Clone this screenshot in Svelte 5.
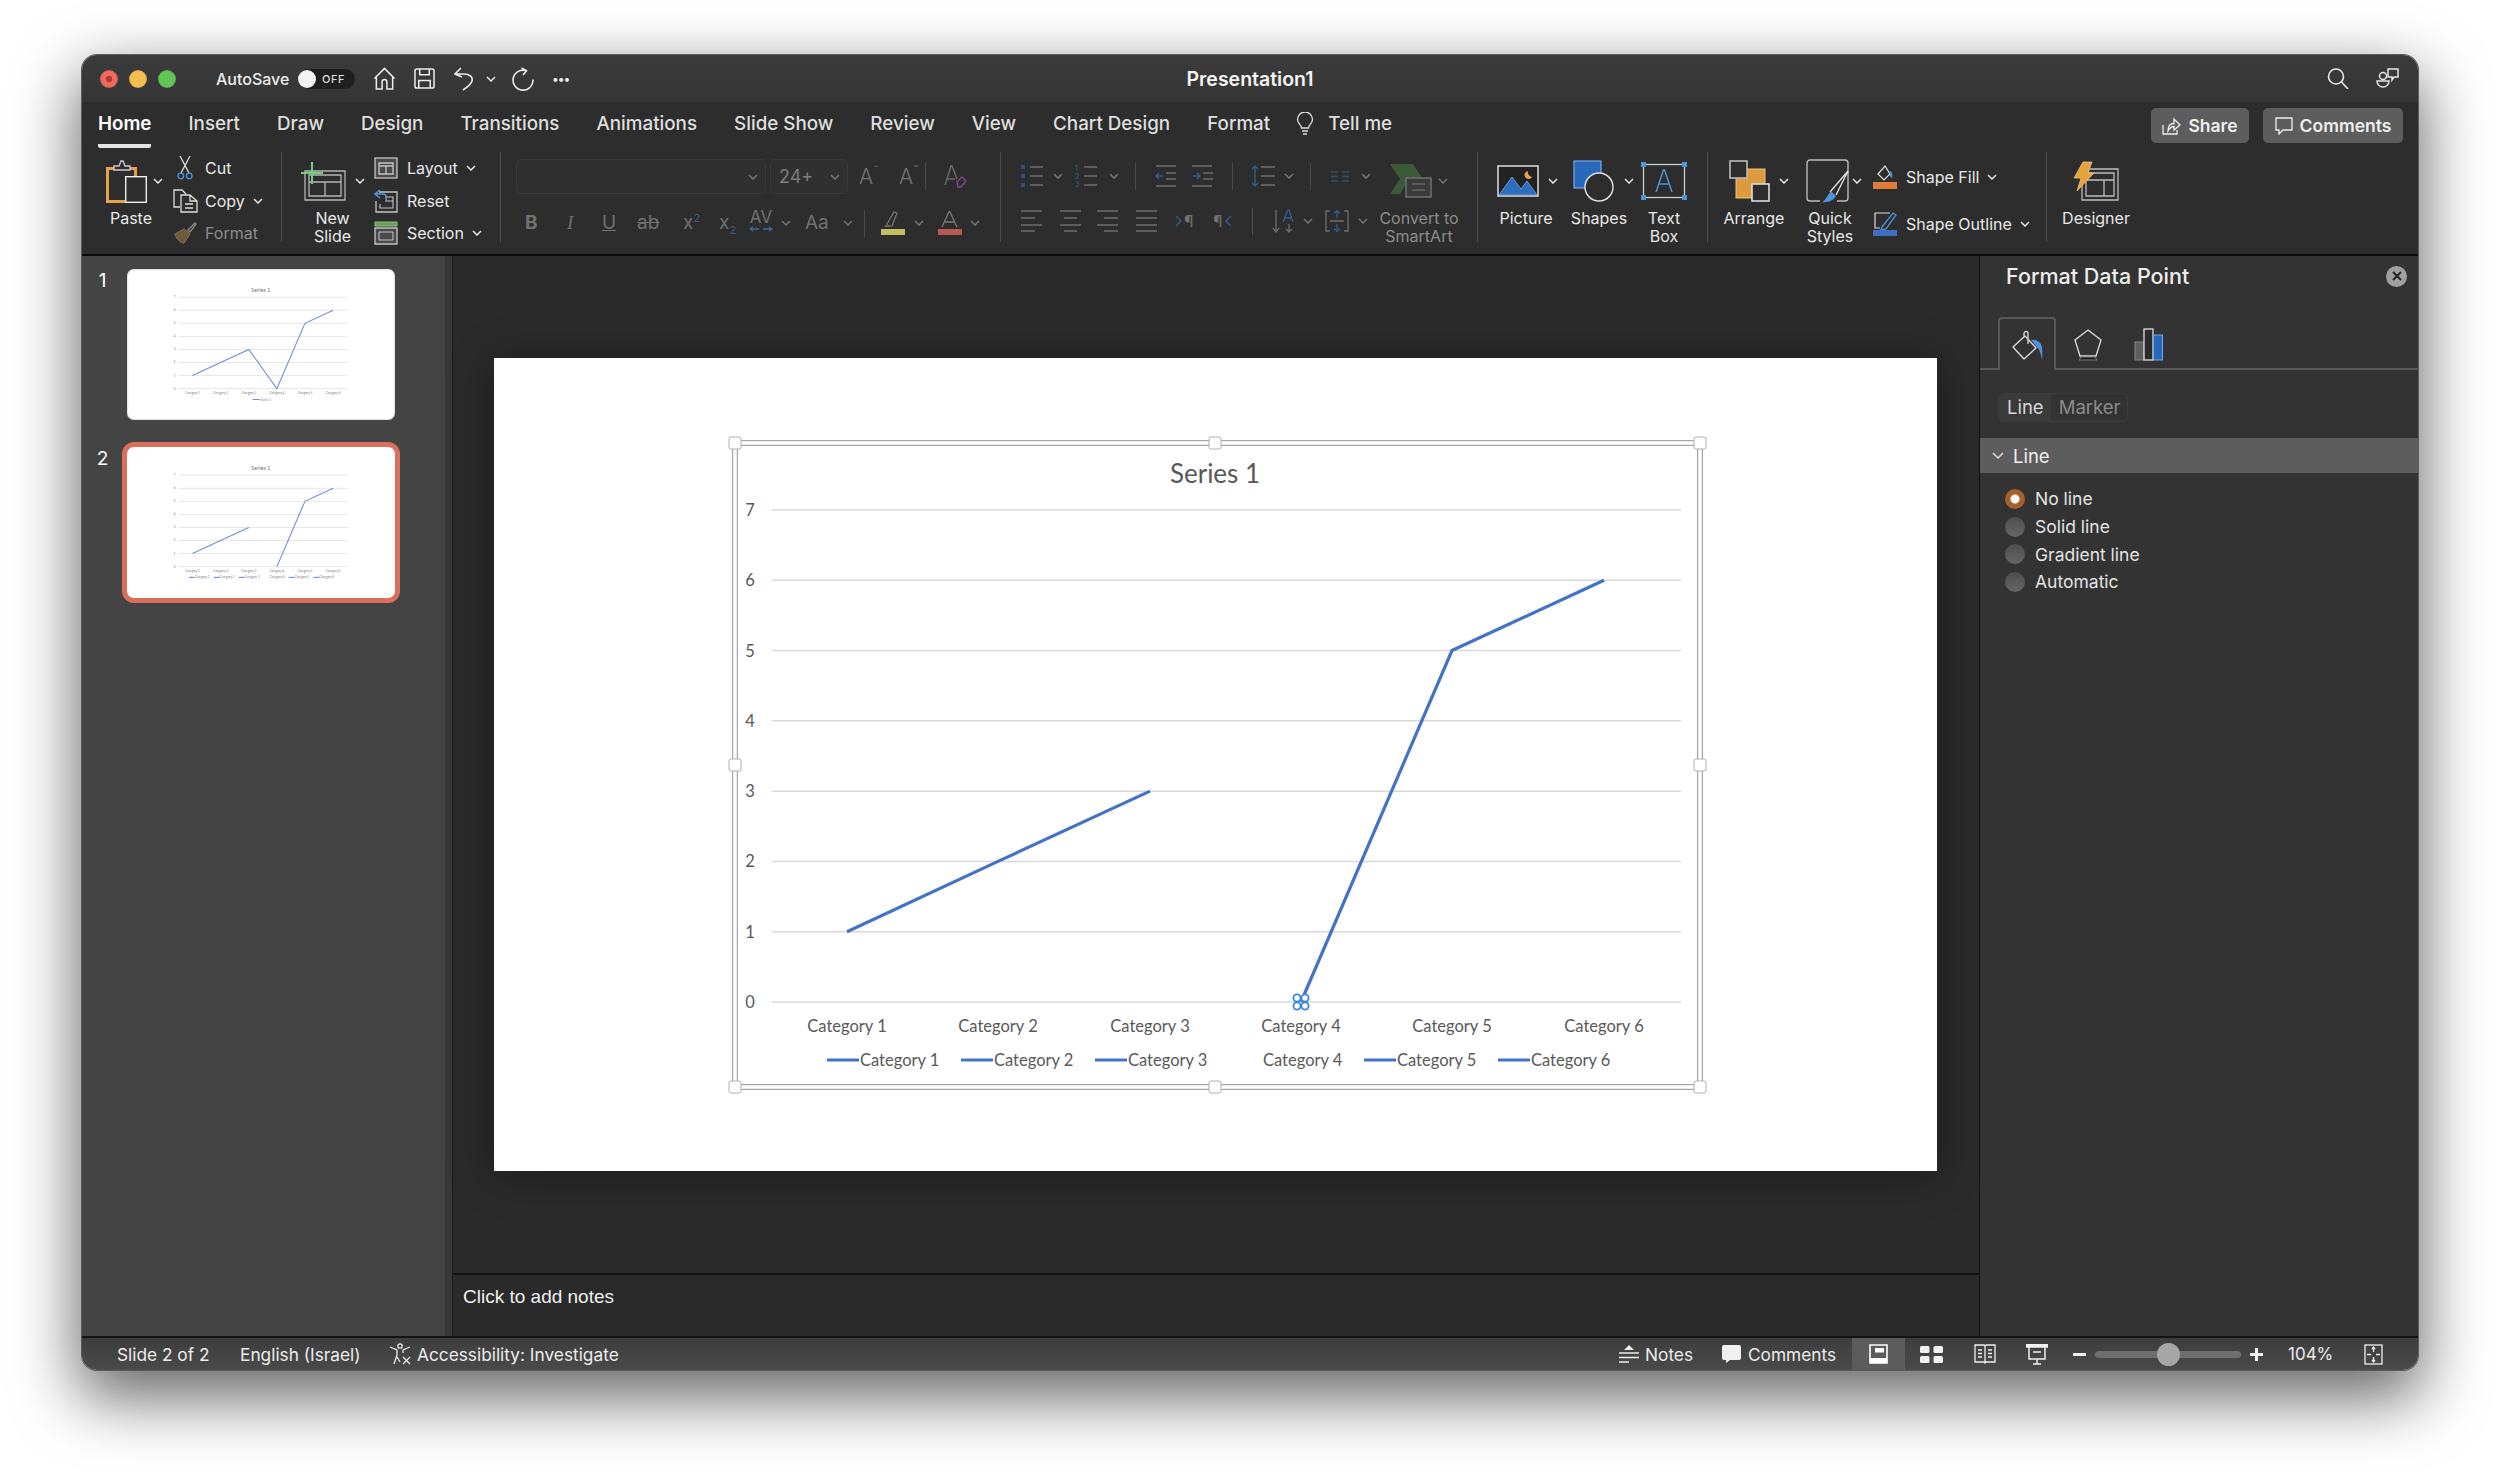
<script>
  const tabs = ["Home", "Insert", "Draw", "Design", "Transitions", "Animations", "Slide Show", "Review", "View", "Chart Design", "Format"];
  const xs = [846, 997, 1149, 1300, 1451, 1603];
  const vals = [1, 2, 3, 0, 5, 6];
  const gy = (v) => 1002 - v * 70.29;
  const pts = xs.map((x, i) => [x, gy(vals[i])]);
  const poly = (list) => list.map((p) => p.join(",")).join(" ");
  const legend = [
    { x: 826, t: 859, line: true },
    { x: 960, t: 993, line: true },
    { x: 1094, t: 1127, line: true },
    { x: 0, t: 1262, line: false },
    { x: 1363, t: 1396, line: true },
    { x: 1497, t: 1530, line: true },
  ];
  const radios = ["No line", "Solid line", "Gradient line", "Automatic"];
  const aligns = [
    "M0 1h21M0 8h14M0 15h21M0 21h14",
    "M0 1h21M4 8h13M0 15h21M4 21h13",
    "M0 1h21M7 8h14M0 15h21M7 21h14",
    "M0 1h21M0 8h21M0 15h21M0 21h21",
  ];
</script>

{#snippet chev()}
  <svg class="chev" width="10" height="6" viewBox="0 0 10 6"><path d="M1 1l4 4 4-4" /></svg>
{/snippet}

{#snippet chart(thumb, full)}
  <svg class={thumb ? "chart mini" : "chart"} viewBox="493 358 1443 813">
    {#if !thumb}
      <rect class="frame" x="734" y="443" width="965" height="644" />
      <rect class="frame-in" x="734" y="443" width="965" height="644" />
    {/if}
    <text class="ttl" x="1214" y="473">Series 1</text>
    {#each [7, 6, 5, 4, 3, 2, 1, 0] as v}
      <line class="grid" x1="771" x2="1680" y1={gy(v)} y2={gy(v)} />
      <text class="lbl" x="749" y={gy(v)}>{v}</text>
    {/each}
    {#each xs as x, i}
      <text class="lbl" {x} y="1026">Category {i + 1}</text>
    {/each}
    {#if full}
      <polyline class="ser" points={poly(pts)} />
      <line class="ser" x1="1170" x2="1208" y1="1061" y2="1061" />
      <text class="lbl start" x="1212" y="1061">Series 1</text>
    {:else}
      <polyline class="ser" points={poly(pts.slice(0, 3))} />
      <polyline class="ser" points={poly(pts.slice(3))} />
      {#each legend as l, i}
        {#if l.line}<line class="ser leg" x1={l.x} x2={l.x + 32} y1="1060" y2="1060" />{/if}
        <text class="lbl start" x={l.t} y="1060">Category {i + 1}</text>
      {/each}
    {/if}
    {#if !thumb}
      <g class="mark">
        <circle cx="1296" cy="998" r="3.6" /><circle cx="1304" cy="998" r="3.6" />
        <circle cx="1296" cy="1006" r="3.6" /><circle cx="1304" cy="1006" r="3.6" />
      </g>
      {#each [[734, 443], [1214, 443], [1699, 443], [734, 765], [1699, 765], [734, 1087], [1214, 1087], [1699, 1087]] as h}
        <rect class="handle" x={h[0] - 6} y={h[1] - 6} width="12" height="12" rx="2" />
      {/each}
    {/if}
  </svg>
{/snippet}

<div class="page">
  <div class="win">
    <header class="titlebar">
      <div class="tb-left">
        <span class="light red"></span><span class="light yellow"></span><span class="light green"></span>
        <span class="autosave">AutoSave</span>
        <span class="toggle"><i></i><b>OFF</b></span>
        <svg class="q-home" width="23" height="24" viewBox="0 0 24 24" fill="none" stroke="currentColor" stroke-width="1.6"><path d="M1.5 11.5L12 1l10.500 10.500M3.500 10v12.500h6V15a2.500 2.500 0 015 0v7.500h6V10" /></svg>
        <svg class="q-save" width="21" height="21" viewBox="0 0 22 22" fill="none" stroke="currentColor" stroke-width="1.6"><path d="M1 3a2 2 0 012-2h16a2 2 0 012 2v16a2 2 0 01-2 2H3a2 2 0 01-2-2zM6 1v6h10V1M5 21v-8h12v8" /></svg>
        <svg class="q-undo" width="20" height="24" viewBox="0 0 20 24" fill="none" stroke="currentColor" stroke-width="1.6"><path d="M7 1L1 7l7 3M1 7h9c6 0 9 3.500 8 7-.6 2-3 5-9 9" /></svg>
        <span class="q-chev">{@render chev()}</span>
        <svg class="q-redo" width="24" height="24" viewBox="0 0 24 24" fill="none" stroke="currentColor" stroke-width="1.6"><path d="M15 3.600A10 10 0 1 0 22 12.500M10.500 1l5 2.700-3.500 4.300" /></svg>
        <span class="q-more">•••</span>
      </div>
      <div class="doc">Presentation1</div>
      <div class="tb-right">
        <svg width="22" height="21" viewBox="0 0 22 21" fill="none" stroke="currentColor" stroke-width="1.6"><circle cx="9" cy="8.500" r="7.500" /><path d="M14.500 14l6.500 7" /></svg>
        <svg width="24" height="24" viewBox="0 0 24 24" fill="none" stroke="currentColor" stroke-width="1.5"><circle cx="7" cy="9" r="3.500" /><path d="M1 14h12a6 6 0 01-12 0zM12 2h10v8h-4l-2 3v-3h-4z" /></svg>
      </div>
    </header>

    <nav class="tabrow">
      {#each tabs as t, i}
        <span class={i === 0 ? "tab on" : "tab"}>{t}</span>
      {/each}
      <svg class="bulb" width="18" height="23" viewBox="0 0 18 23" fill="none" stroke="currentColor" stroke-width="1.3"><path d="M5.500 16c0-3.500-4-4.500-4-8.500a7.500 7.500 0 0115 0c0 4-4 5-4 8.500zM6 19h6M7 22h4" /></svg>
      <span class="tell">Tell me</span>
      <div class="share-wrap">
        <button class="btn share">
          <svg width="19" height="18" viewBox="0 0 19 18" fill="none" stroke="currentColor" stroke-width="1.3"><path d="M1 8v9h14v-4M6 14c0-6 3-7.500 6-7.500V2l6 6-6 5V9.500c-2 0-4 1-6 4.500z" /></svg>
          Share
        </button>
        <button class="btn comments">
          <svg width="18" height="18" viewBox="0 0 18 18" fill="none" stroke="currentColor" stroke-width="1.3"><path d="M1 1h16v12H8l-4 4v-4H1z" /></svg>
          Comments
        </button>
      </div>
    </nav>

    <section class="ribbon">
      <div class="grp g1">
        <div class="big w-paste">
          <div class="big-ic">
            <svg width="41" height="44" viewBox="0 0 41 44" fill="none"><path d="M1.500 9.500h28v33h-28z" stroke="#e2a349" stroke-width="3" /><path d="M8 11V7h5l2-5h2l2 5h5v4z" stroke="#ccc" fill="#2d2d2d" stroke-width="1.4" /><rect x="19.700" y="17.700" width="20.600" height="25.600" fill="#2d2d2d" stroke="#eee" stroke-width="1.4" /></svg>
            {@render chev()}
          </div>
          <span>Paste</span>
        </div>
        <div class="stack st1">
          <div class="sm">
            <span class="sm-ic"><svg width="16" height="24" viewBox="0 0 16 24" fill="none" stroke-width="1.3"><path d="M3 0l9 17M13 0L4 17" stroke="#ddd" /><circle cx="3.800" cy="20" r="2.800" stroke="#4f94d8" /><circle cx="12.200" cy="20" r="2.800" stroke="#4f94d8" /></svg></span>
            <span>Cut</span>
          </div>
          <div class="sm">
            <span class="sm-ic"><svg width="25" height="24" viewBox="0 0 25 24" fill="none" stroke="#ddd" stroke-width="1.3"><path d="M7 18H1V1h8l4 4M8 6h9l7 6v11H8zM17 6v6h7M12 15h8M12 19h8" /></svg></span>
            <span>Copy</span>{@render chev()}
          </div>
          <div class="sm off">
            <span class="sm-ic"><svg width="24" height="22" viewBox="0 0 24 22"><path d="M15 8l7-7 1 1-6 8z" fill="none" stroke="#888" stroke-width="1.3" /><path d="M2 12l9-5 6 5-6 9c-3 0-8-4-9-9z" fill="#6e5a3a" stroke="#8a7650" /></svg></span>
            <span>Format</span>
          </div>
        </div>
      </div>

      <div class="grp g2">
        <div class="big w-new">
          <div class="big-ic">
            <svg width="46" height="40" viewBox="0 0 46 40" fill="none"><path d="M5 10h40v29H5zM9 14h32v21H9zM9 21h32M25 21v14" stroke="#b5b5b5" stroke-width="1.3" /><path d="M1 12h22M12 1v22" stroke="#72d07a" stroke-width="2" /></svg>
            {@render chev()}
          </div>
          <span>New</span><span>Slide</span>
        </div>
        <div class="stack st2">
          <div class="sm">
            <span class="sm-ic"><svg width="24" height="22" viewBox="0 0 24 22" fill="#4a4a4a" stroke="#c4c4c4" stroke-width="1.3"><rect x="1" y="1" width="22" height="20" /><path d="M5 6h14v11H5zM5 9h14M12 9v8" /></svg></span>
            <span>Layout</span>{@render chev()}
          </div>
          <div class="sm">
            <span class="sm-ic"><svg width="24" height="24" viewBox="0 0 24 24" fill="none"><path d="M5 3h18v20H2V12" stroke="#c4c4c4" stroke-width="1.3" /><path d="M11 8h8v11H6v-4M11 12h8" stroke="#c4c4c4" stroke-width="1.1" /><path d="M6 1L1 5l5 4M1 5h8c3 0 4 3 3 6" stroke="#4f94d8" stroke-width="1.6" /></svg></span>
            <span>Reset</span>
          </div>
          <div class="sm">
            <span class="sm-ic"><svg width="24" height="24" viewBox="0 0 24 24" fill="none"><path d="M1 1h22v4H1z" fill="#6f9c5e" stroke="#8dc47a" /><path d="M1 7h22v16H1z" fill="#4a4a4a" stroke="#c4c4c4" stroke-width="1.3" /><path d="M5 11h14v8H5z" stroke="#c4c4c4" /></svg></span>
            <span>Section</span>{@render chev()}
          </div>
        </div>
      </div>

      <div class="grp g3 dim">
        <div class="fontrow">
          <div class="field fname">{@render chev()}</div>
          <div class="field fsize"><span>24+</span>{@render chev()}</div>
          <span class="grow">A<sup>ˆ</sup></span>
          <span class="grow">A<sup>ˇ</sup></span>
          <i class="sep"></i>
          <svg width="24" height="23" viewBox="0 0 24 23" fill="none" stroke="#6e6e6e" stroke-width="1.3"><path d="M1 20L7 1h1l5 13M3 14h8" /><path d="M13 17l5-5 4 4-5 6h-3z" stroke="#7c4d93" /></svg>
        </div>
        <div class="r r-font">
          <span class="gl bold">B</span>
          <span class="gl ital">I</span>
          <span class="gl under">U</span>
          <span class="gl strike">ab</span>
          <span class="gl">x<sup>2</sup></span>
          <span class="gl">x<sub>2</sub></span>
          <span class="av">AV<svg width="24" height="6" viewBox="0 0 24 6" fill="none" stroke="#3f6b96" stroke-width="1.3"><path d="M4 1L1 3l3 2M1 3h9M20 1l3 2-3 2M14 3h9" /></svg></span>
          {@render chev()}
          <span class="gl">Aa</span>
          {@render chev()}
          <i class="sep"></i>
          <svg width="24" height="24" viewBox="0 0 24 24" fill="none"><path d="M6 13l7-12 3 1-5 13H7z" stroke="#777" stroke-width="1.2" /><path d="M4 14h6l-2 2H3z" fill="#666" /><rect y="18" x="0" width="24" height="6" fill="#c3bd63" /></svg>
          {@render chev()}
          <svg class="fontcolor" width="24" height="24" viewBox="0 0 24 24" fill="none"><path d="M4 16L11 1h1l7 15M7 11h9" stroke="#7a7a7a" stroke-width="1.3" /><rect y="18" width="24" height="6" fill="#b65a52" /></svg>
          {@render chev()}
        </div>
      </div>

      <div class="grp g4 dim">
        <div class="g4-tools">
          <div class="r r-para1">
            <svg width="22" height="22" viewBox="0 0 22 22"><path d="M9 2h13M9 11h13M9 20h13" stroke="#6e6e6e" stroke-width="1.5" /><path d="M0 0h4v4H0zM0 9h4v4H0zM0 18h4v4H0z" fill="#2e527d" /></svg>
            {@render chev()}
            <svg width="22" height="22" viewBox="0 0 22 22"><path d="M9 2h13M9 11h13M9 20h13" stroke="#6e6e6e" stroke-width="1.5" /><text class="nums" x="0" y="6">1</text><text class="nums" x="0" y="14">2</text><text class="nums" x="0" y="22">3</text></svg>
            {@render chev()}
            <i class="sep"></i>
            <svg width="21" height="22" viewBox="0 0 21 22" fill="none"><path d="M1 1h20M11 8h10M11 14h10M1 21h20" stroke="#6e6e6e" stroke-width="1.5" /><path d="M8 11H1m3-3l-3 3 3 3" stroke="#2f5f90" stroke-width="1.5" /></svg>
            <svg width="21" height="22" viewBox="0 0 21 22" fill="none"><path d="M0 1h20M11 8h10M11 14h10M0 21h20" stroke="#6e6e6e" stroke-width="1.5" /><path d="M1 11h7m-3-3l3 3-3 3" stroke="#2f5f90" stroke-width="1.5" /></svg>
            <i class="sep"></i>
            <svg width="24" height="22" viewBox="0 0 24 22" fill="none"><path d="M10 2h14M10 11h14M10 20h14" stroke="#6e6e6e" stroke-width="1.5" /><path d="M4 1v20M1 4l3-3 3 3M1 18l3 3 3-3" stroke="#2f5f90" stroke-width="1.4" /></svg>
            {@render chev()}
            <i class="sep"></i>
            <svg width="18" height="11" viewBox="0 0 18 11"><path d="M0 1h7M0 5.500h7M0 10h7M11 1h7M11 5.500h7M11 10h7" stroke="#33506f" stroke-width="1.4" /></svg>
            {@render chev()}
          </div>
          <div class="r r-para2">
            {#each aligns as a}
              <svg width="21" height="22" viewBox="0 0 21 22"><path d={a} stroke="#6e6e6e" stroke-width="1.5" /></svg>
            {/each}
            <span class="pil"><svg width="7" height="12" viewBox="0 0 7 12" fill="none" stroke="#2f5f90" stroke-width="1.4"><path d="M1 1l5 5-5 5" /></svg>¶</span>
            <span class="pil">¶<svg width="7" height="12" viewBox="0 0 7 12" fill="none" stroke="#2f5f90" stroke-width="1.4"><path d="M6 1L1 6l5 5" /></svg></span>
            <i class="sep"></i>
            <svg width="22" height="24" viewBox="0 0 22 24" fill="none"><path d="M4 1v22M1 19l3 4 3-4M17 15v8M14 20l3 3 3-3" stroke="#6e6e6e" stroke-width="1.3" /><path d="M11 13l5-12h1l4 12M13 9h7" stroke="#2f5f90" stroke-width="1.3" /></svg>
            {@render chev()}
            <svg width="24" height="22" viewBox="0 0 24 22" fill="none"><path d="M5 1H1v20h4M19 1h4v20h-4M5 11h14" stroke="#6e6e6e" stroke-width="1.3" /><path d="M12 1v7M9 3.500l3-3 3 3M12 14v7M9 18.500l3 3 3-3" stroke="#2f5f90" stroke-width="1.3" /></svg>
            {@render chev()}
          </div>
        </div>
        <div class="big w-smart">
          <div class="big-ic">
            <svg width="42" height="34" viewBox="0 0 42 34" fill="none"><path d="M0 0h23l9 14H20L10 30H0l10-15z" fill="#3b5a38" /><rect x="16" y="14" width="25" height="19" fill="#3a3a3a" stroke="#7a7a7a" stroke-width="1.3" /><path d="M22 20h13M22 26h13" stroke="#7a7a7a" /></svg>
            {@render chev()}
          </div>
          <span>Convert to</span><span>SmartArt</span>
        </div>
      </div>

      <div class="grp g5">
        <div class="big w-pic">
          <div class="big-ic">
            <svg width="42" height="32" viewBox="0 0 42 32"><rect x="1" y="1" width="40" height="30" fill="#222" stroke="#ddd" stroke-width="1.5" /><path d="M2 30L15 12l9 12 6-8 10 14z" fill="#2d6dc0" stroke="#8ab6e6" stroke-width=".7" /><path d="M31 6a4 4 0 104 6 5 5 0 01-4-6z" fill="#e0a349" /></svg>
            {@render chev()}
          </div>
          <span>Picture</span>
        </div>
        <div class="big w-shp">
          <div class="big-ic">
            <svg width="41" height="42" viewBox="0 0 41 42"><rect x="1" y="1" width="27" height="27" fill="#2767bc" stroke="#75a8e0" stroke-width="1.2" /><circle cx="26" cy="27" r="14" fill="#2d2d2d" stroke="#ddd" stroke-width="1.5" /></svg>
            {@render chev()}
          </div>
          <span>Shapes</span>
        </div>
        <div class="big w-box">
          <div class="big-ic">
            <svg width="46" height="38" viewBox="0 0 46 38"><rect x="2.500" y="2.500" width="41" height="33" fill="none" stroke="#ccc" stroke-width="1.3" /><path d="M0 0h5v5H0zM41 0h5v5h-5zM0 33h5v5H0zM41 33h5v5h-5z" fill="#4f94d8" /><path d="M15 30L22.500 8h1L31 30M18 22h10" fill="none" stroke="#4f94d8" stroke-width="1.5" /></svg>
          </div>
          <span>Text</span><span>Box</span>
        </div>
      </div>

      <div class="grp g6">
        <div class="big w-arr">
          <div class="big-ic">
            <svg width="42" height="42" viewBox="0 0 42 42"><rect x="7" y="9" width="29" height="29" fill="#dd9a3f" stroke="#f0c27a" /><rect x="1" y="1" width="17" height="17" fill="#2d2d2d" stroke="#bbb" stroke-width="1.6" /><rect x="23" y="24" width="17" height="17" fill="#2d2d2d" stroke="#ddd" stroke-width="1.6" /></svg>
            {@render chev()}
          </div>
          <span>Arrange</span>
        </div>
        <div class="big w-qs">
          <div class="big-ic">
            <svg width="44" height="44" viewBox="0 0 44 44" fill="none"><path d="M14 42H4a3 3 0 01-3-3V4a3 3 0 013-3h35a3 3 0 013 3v35a3 3 0 01-3 3h-8" stroke="#bbb" stroke-width="1.4" /><path d="M24 33l18-21-12 24" stroke="#ddd" stroke-width="1.4" /><path d="M16 43c3-1 5-6 9-11l5 5c-2 4-8 7-14 6z" fill="#4f94d8" /></svg>
            {@render chev()}
          </div>
          <span>Quick</span><span>Styles</span>
        </div>
        <div class="stack st6">
          <div class="sm">
            <span class="sm-ic"><svg width="24" height="24" viewBox="0 0 24 24" fill="none"><path d="M5 9l7-8 5 8-6 6z" stroke="#ddd" stroke-width="1.2" /><path d="M17 6c2 1 3 4 2 7-2-1-3-4-2-7z" fill="#4f94d8" /><rect y="17" width="24" height="7" fill="#dd7d3a" /></svg></span>
            <span>Shape Fill</span>{@render chev()}
          </div>
          <div class="sm">
            <span class="sm-ic"><svg width="24" height="24" viewBox="0 0 24 24" fill="none"><path d="M17 1H2v15h5" stroke="#ddd" stroke-width="1.2" /><path d="M9 15l11-14 3 2-10 14-5 1z" stroke="#4f94d8" stroke-width="1.3" /><rect y="18" width="24" height="6" fill="#3f6ec2" /></svg></span>
            <span>Shape Outline</span>{@render chev()}
          </div>
        </div>
      </div>

      <div class="g7">
        <div class="big w-des">
          <div class="big-ic">
            <svg width="46" height="40" viewBox="0 0 46 40" fill="none"><path d="M9 8h36v31H9zM13 12h28v23H13zM13 19h28M31 19v16" stroke="#bdbdbd" stroke-width="1.3" /><path d="M10 1h9l-4 11h6L4 30l4-13H1z" fill="#e6a23c" stroke="#f5cf8b" stroke-width=".7" /></svg>
          </div>
          <span>Designer</span>
        </div>
      </div>
    </section>

    <div class="body">
      <aside class="slides">
        <div class="thumbrow">
          <span class="num">1</span>
          <div class="thumb">{@render chart(true, true)}</div>
        </div>
        <div class="thumbrow">
          <span class="num">2</span>
          <div class="thumb sel">{@render chart(true, false)}</div>
        </div>
      </aside>

      <main class="editor">
        <div class="stage">
          <div class="slide">{@render chart(false, false)}</div>
        </div>
        <div class="notes">Click to add notes</div>
      </main>

      <aside class="pane">
        <div class="pane-head">
          <span>Format Data Point</span>
          <button class="close" aria-label="Close">
            <svg width="10" height="10" viewBox="0 0 10 10" fill="none" stroke="#222" stroke-width="1.8"><path d="M1 1l8 8M9 1L1 9" /></svg>
          </button>
        </div>
        <div class="pane-tabs">
          <div class="ptab on">
            <svg width="32" height="32" viewBox="0 0 32 32" fill="none"><path d="M2 17L14 6l11 12-12 11zM13 7V3.500a2 2 0 014 0V14" stroke="#ddd" stroke-width="1.3" stroke-linejoin="round" /><path d="M20 10c5-1 10 2 11 7 .5 4 .5 9 0 13-1-5-2-10-5-13-1 0-2-3-6-7z" fill="#4f94d8" /></svg>
          </div>
          <div class="ptab">
            <svg width="30" height="32" viewBox="0 0 30 32" fill="none"><path d="M15 1l13 10-5 16H7L2 11z" stroke="#ddd" stroke-width="1.3" /><path d="M6 31l2-3h14l2 3z" fill="#1c1c1c" stroke="#777" /></svg>
          </div>
          <div class="ptab">
            <svg width="30" height="33" viewBox="0 0 30 33"><rect x="1" y="14" width="9" height="18" fill="#5e5e5e" stroke="#888" /><rect x="10" y="1" width="9" height="31" fill="#2b2b2b" stroke="#ddd" stroke-width="1.3" /><rect x="19.500" y="7" width="9" height="25" fill="#2767bc" stroke="#75a8e0" /></svg>
          </div>
        </div>
        <div class="seg"><span class="on">Line</span><span>Marker</span></div>
        <div class="section-bar">
          <svg width="12" height="8" viewBox="0 0 12 8" fill="none" stroke="#ddd" stroke-width="1.5"><path d="M1 1l5 5 5-5" /></svg>
          Line
        </div>
        <div class="radios">
          {#each radios as r, i}
            <div class="radio-row">
              <span class={i === 0 ? "radio on" : "radio"}></span>{r}
            </div>
          {/each}
        </div>
      </aside>
    </div>

    <footer class="status">
      <span class="st-a">Slide 2 of 2</span>
      <span class="st-b">English (Israel)</span>
      <svg class="st-ic" width="24" height="22" viewBox="0 0 24 22" fill="none" stroke="currentColor" stroke-width="1.3"><circle cx="11" cy="3" r="2.200" /><path d="M1 4l7 3v5l-3 9M21 4l-7 3v3M14 14l7 7M21 14l-7 7M8 14l3 5" /></svg>
      <span class="st-c">Accessibility: Investigate</span>
      <div class="st-right">
        <svg width="20" height="18" viewBox="0 0 20 18"><path d="M10 0l5 5H5z" fill="#eee" /><path d="M0 8h20M0 12.500h20M0 17h10" stroke="#eee" stroke-width="1.600" /></svg>
        <span>Notes</span>
        <svg width="19" height="18" viewBox="0 0 19 18"><path d="M2 0h15a2 2 0 012 2v11a2 2 0 01-2 2H8l-4 3v-3H2a2 2 0 01-2-2V2a2 2 0 012-2z" fill="#f0f0f0" /></svg>
        <span>Comments</span>
        <span class="view on"><svg width="21" height="20" viewBox="0 0 21 20"><path d="M2 1h17v18H2z" fill="none" stroke="#fff" stroke-width="1.600" /><path d="M2 14h17v5H2zM7 4h9v4.500H7z" fill="#fff" /></svg></span>
        <span class="view"><svg width="23" height="17" viewBox="0 0 23 17" fill="#f0f0f0"><rect width="9.500" height="7" rx="1.500" /><rect x="13.500" width="9.500" height="7" rx="1.500" /><rect y="10" width="9.500" height="7" rx="1.500" /><rect x="13.500" y="10" width="9.500" height="7" rx="1.500" /></svg></span>
        <span class="view"><svg width="22" height="20" viewBox="0 0 22 20" fill="none" stroke="#f0f0f0" stroke-width="1.300"><path d="M1 1h9l1 1 1-1h9v17h-9l-1 1-1-1H1zM11 2v16M4 6h4M4 9.500h4M4 13h4M14 6h4M14 9.500h4M14 13h4" /></svg></span>
        <span class="view"><svg width="22" height="21" viewBox="0 0 22 21" fill="none" stroke="#f0f0f0" stroke-width="1.500"><path d="M3 3v12h16V3M11 15v5M7 20h8M7 8h8" /><path d="M0 .500h22v2.500H0z" fill="#f0f0f0" /></svg></span>
        <span class="zoom-btn"><i></i></span>
        <div class="slider"><span class="knob"></span></div>
        <span class="zoom-btn plus"><i></i></span>
        <span class="pct">104%</span>
        <svg width="19" height="21" viewBox="0 0 19 21" fill="none" stroke="#f0f0f0" stroke-width="1.300"><rect x="1" y="1" width="17" height="19" /><path d="M9.500 3v5M8 5l1.500-2L11 5M9.500 18v-5M8 16l1.500 2 1.500-2M3 10.500h4M16 10.500h-4" /></svg>
      </div>
    </footer>
  </div>
</div>

<style>
  :global(body) {
    margin: 0;
    background: #fff;
  }
  .page {
    width: 2500px;
    height: 1478px;
    padding: 55px 82px 0 82px;
    box-sizing: border-box;
    font-family: Inter, "Noto Sans", sans-serif;
    overflow: hidden;
  }
  .win {
    width: 2336px;
    height: 1315px;
    border-radius: 15px;
    overflow: hidden;
    color: #e8e8e8;
    display: flex;
    flex-direction: column;
    box-shadow: 0 0 0 1px #5c5c5c, 0 24px 64px 4px rgba(0, 0, 0, 0.6);
  }

  .titlebar {
    height: 47px;
    flex: none;
    background: linear-gradient(#3b3b3b, #353535);
    display: grid;
    grid-template-columns: 1fr auto 1fr;
    align-items: center;
  }
  .tb-left {
    display: flex;
    align-items: center;
    padding-left: 18px;
    color: #ececec;
  }
  .light {
    width: 18px;
    height: 18px;
    border-radius: 50%;
    margin-right: 11px;
    box-sizing: border-box;
    border: 1px solid rgba(0, 0, 0, 0.1);
  }
  .red {
    background: radial-gradient(circle, #b13a33 0 3px, #ed6a5e 3.6px);
  }
  .yellow {
    background: #f5bf4f;
  }
  .green {
    background: #61c554;
  }
  .autosave {
    margin-left: 29px;
    font-size: 16px;
    font-weight: 500;
    width: 82px;
  }
  .toggle {
    width: 57px;
    height: 20px;
    border-radius: 10px;
    background: #1f1f1f;
    display: flex;
    align-items: center;
  }
  .toggle i {
    width: 18px;
    height: 18px;
    border-radius: 50%;
    background: #f4f4f4;
  }
  .toggle b {
    font-size: 11px;
    font-weight: 500;
    margin-left: 6px;
    letter-spacing: 0.5px;
    color: #ddd;
  }
  .q-home {
    margin-left: 18px;
  }
  .q-save {
    margin-left: 18px;
  }
  .q-undo {
    margin-left: 19px;
  }
  .q-chev {
    display: flex;
    margin-left: 12px;
  }
  .q-redo {
    margin-left: 15px;
  }
  .q-more {
    margin-left: 17px;
    font-size: 12px;
    letter-spacing: -1px;
  }
  .doc {
    font-size: 19.500px;
    font-weight: 600;
    color: #f4f4f4;
  }
  .tb-right {
    display: flex;
    justify-content: flex-end;
    align-items: center;
    gap: 27px;
    padding-right: 18px;
    color: #e6e6e6;
  }

  .chev {
    fill: none;
    stroke: #e6e6e6;
    stroke-width: 1.5;
    flex: none;
  }
  .dim .chev {
    stroke: #757575;
  }

  .tabrow {
    height: 50px;
    flex: none;
    background: #2d2d2d;
    display: flex;
    align-items: flex-start;
    gap: 37px;
    padding-left: 16px;
    box-sizing: border-box;
  }
  .tab {
    padding-top: 6px;
    line-height: 32px;
    height: 36px;
    box-sizing: content-box;
    font-size: 18.800px;
    font-weight: 500;
    color: #dfdfdf;
    border-bottom: 4px solid transparent;
    white-space: nowrap;
  }
  .tab.on {
    color: #fff;
    font-weight: 600;
    border-bottom-color: #e4e4e4;
    border-radius: 0 0 2px 2px;
  }
  .bulb {
    margin: 10px -23px 0 -11px;
    color: #ddd;
    flex: none;
  }
  .tell {
    font-size: 18.800px;
    font-weight: 500;
    line-height: 32px;
    padding-top: 6px;
    color: #dfdfdf;
  }
  .share-wrap {
    margin-left: auto;
    display: flex;
    gap: 14px;
    padding: 6px 15px 0 0;
  }
  .btn {
    height: 35px;
    border: 0;
    border-radius: 5px;
    background: #5d5d5d;
    color: #eee;
    font: 600 17.500px Inter, sans-serif;
    display: flex;
    align-items: center;
    justify-content: center;
    gap: 7px;
    padding: 0;
  }
  .share {
    width: 98px;
  }
  .comments {
    width: 140px;
  }

  .ribbon {
    height: 104px;
    flex: none;
    box-sizing: border-box;
    background: #2d2d2d;
    border-bottom: 2px solid #0c0c0c;
    padding-bottom: 10px;
    display: flex;
    font-size: 16px;
    color: #e8e8e8;
    line-height: 18px;
  }
  .grp {
    height: 90px;
    border-right: 1px solid #4b4b4b;
    box-sizing: border-box;
    display: flex;
    flex: none;
  }
  .g1 {
    width: 200px;
  }
  .g2 {
    width: 219px;
    padding-left: 9px;
  }
  .g3 {
    width: 500px;
    display: block;
  }
  .g4 {
    width: 477px;
  }
  .g5 {
    width: 230px;
    padding-left: 11px;
  }
  .g6 {
    width: 339px;
    padding-left: 11px;
  }
  .g7 {
    padding-left: 13px;
  }
  .big {
    display: flex;
    flex-direction: column;
    align-items: center;
    flex: none;
    box-sizing: border-box;
  }
  .big span {
    flex: none;
  }
  .big-ic {
    height: 57px;
    flex: none;
    display: flex;
    align-items: center;
    gap: 6px;
  }
  .w-paste {
    width: 90px;
    padding-left: 8px;
  }
  .w-paste .big-ic {
    margin-left: 7px;
  }
  .w-new {
    width: 83px;
  }
  .w-new .big-ic {
    gap: 9px;
  }
  .w-smart {
    width: 90px;
    color: #8c8c8c;
  }
  .w-pic {
    width: 74px;
  }
  .w-pic .big-ic {
    margin-left: 3px;
    gap: 9px;
  }
  .w-shp {
    width: 72px;
  }
  .w-shp .big-ic {
    margin-left: 9px;
    gap: 10px;
  }
  .w-box {
    width: 58px;
  }
  .w-arr {
    width: 70px;
  }
  .w-arr .big-ic {
    margin-left: 10px;
    gap: 8px;
  }
  .w-qs {
    width: 74px;
    margin-left: 4px;
  }
  .w-qs .big-ic {
    margin-left: 8px;
    gap: 2px;
  }
  .w-des {
    width: 72px;
  }

  .stack {
    display: flex;
    flex-direction: column;
  }
  .sm {
    height: 32.500px;
    flex: none;
    display: flex;
    align-items: center;
    white-space: nowrap;
  }
  .sm .chev {
    margin-left: 8px;
  }
  .sm-ic {
    width: 26px;
    margin-right: 7px;
    display: flex;
    justify-content: center;
    flex: none;
  }
  .off {
    color: #8c8c8c;
  }
  .st2 .sm-ic {
    width: 24px;
    margin-right: 9px;
  }
  .st6 {
    margin-left: 6px;
    padding-top: 9px;
    gap: 14px;
  }
  .st6 .sm-ic {
    width: 24px;
    margin-right: 9px;
  }

  .sep {
    width: 1px;
    height: 27px;
    background: #4b4b4b;
    display: block;
  }
  .fontrow {
    display: grid;
    grid-template-columns: 250px 82px 40px 37px 19px auto;
    align-items: center;
    margin: 7px 0 0 15px;
    height: 35px;
  }
  .field {
    height: 35px;
    box-sizing: border-box;
    background: #303030;
    border: 1px solid #393939;
    border-radius: 5px;
    display: flex;
    align-items: center;
    justify-content: flex-end;
    padding-right: 7px;
  }
  .fname {
    width: 250px;
  }
  .fsize {
    width: 78px;
    margin-left: 4px;
    justify-content: space-between;
    padding-left: 8px;
    color: #7d7d7d;
    font-size: 18px;
  }
  .grow {
    margin-left: 11px;
    color: #757575;
    font-size: 21px;
    font-weight: 300;
  }
  .grow sup {
    font-size: 14px;
    line-height: 0;
  }
  .r {
    display: grid;
    align-items: center;
    justify-items: start;
  }
  .r-font {
    height: 34px;
    margin-top: 12px;
    padding-left: 25px;
    grid-template-columns: 39px 37px 34px 47px 36px 30px 32px 24px 38px 21px 17px 33px 24px 32px 10px;
  }
  .gl {
    color: #717171;
    font-size: 19px;
    line-height: 24px;
  }
  .gl sup,
  .gl sub {
    font-size: 11px;
    line-height: 0;
    color: #3c5d80;
  }
  .bold {
    font-weight: 700;
    margin-left: -1px;
  }
  .ital {
    font-family: "Liberation Serif", serif;
    font-style: italic;
    margin-left: 2px;
  }
  .under {
    text-decoration: underline;
  }
  .strike {
    text-decoration: line-through;
    margin-left: 1px;
  }
  .av {
    color: #717171;
    font-size: 17px;
    line-height: 17px;
    display: flex;
    flex-direction: column;
    align-items: center;
    margin-top: -5px;
  }
  .g4-tools {
    width: 373px;
    box-sizing: border-box;
    padding-left: 20px;
    flex: none;
  }
  .r-para1 {
    margin-top: 9px;
    height: 30px;
    grid-template-columns: 32px 22px 34px 26px 20px 37px 40px 19px 33px 26px 21px 30px 10px;
  }
  .r-para2 {
    margin-top: 15px;
    height: 30px;
    grid-template-columns: 39px 37px 39px 39px 38px 39px 20px 31px 22px 33px 10px;
  }
  .nums {
    font-size: 7.500px;
    fill: #2f5f90;
    font-family: Inter, sans-serif;
  }
  .pil {
    color: #717171;
    font-size: 16px;
    display: flex;
    align-items: center;
    gap: 2px;
  }

  .body {
    height: 1080px;
    display: flex;
    flex: none;
  }
  .slides {
    width: 363px;
    flex: none;
    background: #444;
    border-right: 7px solid #383838;
    padding-top: 13px;
    box-sizing: content-box;
    height: 1067px;
  }
  .thumbrow {
    display: flex;
    margin-bottom: 27px;
  }
  .num {
    width: 41px;
    padding-right: 4px;
    text-align: center;
    font-size: 19px;
    line-height: 24px;
    color: #fff;
  }
  .thumb {
    width: 268px;
    height: 151px;
    background: #fff;
    border-radius: 7px;
    overflow: hidden;
    box-shadow: inset 0 0 2px #999;
  }
  .thumb.sel {
    overflow: visible;
    box-shadow: 0 0 0 5px #d9705b;
  }

  .chart {
    display: block;
    width: 100%;
    height: 100%;
    font-family: Lato, "Open Sans", sans-serif;
  }
  .ttl {
    font-size: 26px;
    fill: #595959;
    text-anchor: middle;
    dominant-baseline: central;
  }
  .lbl {
    font-size: 16.500px;
    fill: #595959;
    text-anchor: middle;
    dominant-baseline: central;
  }
  .start {
    text-anchor: start;
  }
  .grid {
    stroke: #d9d9d9;
    stroke-width: 1.500;
  }
  .ser {
    fill: none;
    stroke: #4472c4;
    stroke-width: 3.200;
  }
  .leg {
    stroke-width: 3;
  }
  .frame {
    fill: none;
    stroke: #a8a8a8;
    stroke-width: 6;
  }
  .frame-in {
    fill: none;
    stroke: #fff;
    stroke-width: 3.500;
  }
  .handle {
    fill: #fff;
    stroke: #b0b0b0;
    stroke-width: 1;
  }
  .mark {
    fill: #fff;
    stroke: #3a86dd;
    stroke-width: 1.800;
  }
  .mini .grid {
    stroke: #e4e4e4;
    stroke-width: 5;
  }
  .mini .ser {
    stroke: #6e8fd8;
    stroke-width: 6;
  }
  .mini .lbl,
  .mini .ttl {
    fill: #777;
  }
  .mini .ttl {
    font-size: 30px;
  }

  .editor {
    flex: none;
    width: 1528px;
    display: flex;
    flex-direction: column;
    border-left: 1px solid #1a1a1a;
    border-right: 1px solid #111;
    box-sizing: border-box;
    background: #2a2a2a;
  }
  .stage {
    flex: 1;
    display: flex;
    align-items: center;
    justify-content: center;
    padding-right: 1px;
  }
  .slide {
    width: 1443px;
    height: 813px;
    background: #fff;
    box-shadow: 0 4px 40px rgba(0, 0, 0, 0.35);
  }
  .notes {
    height: 63px;
    flex: none;
    box-sizing: border-box;
    border-top: 2px solid #111;
    padding: 9px 0 0 10px;
    font: 19px/26px "Liberation Sans", sans-serif;
    color: #f0f0f0;
  }

  .pane {
    flex: 1;
    background: #333;
    color: #e4e4e4;
  }
  .pane-head {
    height: 40px;
    margin-bottom: 21px;
    display: flex;
    align-items: center;
    justify-content: space-between;
    padding: 0 11px 0 26px;
    font-size: 21.500px;
    font-weight: 500;
    color: #eee;
  }
  .close {
    width: 21px;
    height: 21px;
    border-radius: 50%;
    border: 0;
    padding: 0;
    background: #a0a0a0;
    display: flex;
    align-items: center;
    justify-content: center;
  }
  .pane-tabs {
    height: 53px;
    box-sizing: border-box;
    border-bottom: 2px solid #585858;
    padding-left: 18px;
    display: flex;
    gap: 3px;
  }
  .ptab {
    width: 58px;
    height: 53px;
    box-sizing: border-box;
    display: flex;
    align-items: center;
    justify-content: center;
    padding-top: 2px;
  }
  .ptab.on {
    border: 2px solid #585858;
    border-bottom: 0;
    border-radius: 4px 4px 0 0;
    background: #333;
  }
  .seg {
    margin: 23px 0 0 18px;
    width: 130px;
    height: 29px;
    box-sizing: border-box;
    border: 1px solid #3c3c3c;
    border-radius: 6px;
    display: flex;
    font-size: 18.500px;
    line-height: 27px;
    color: #8c8c8c;
  }
  .seg span {
    padding: 0 8px;
  }
  .seg .on {
    color: #d6d6d6;
    background: #3a3a3a;
    border-radius: 6px 0 0 6px;
    padding-right: 7px;
  }
  .section-bar {
    margin-top: 16px;
    height: 35px;
    background: #5d5d5d;
    display: flex;
    align-items: center;
    gap: 9px;
    padding-left: 12px;
    font-size: 18.500px;
    color: #f0f0f0;
  }
  .radios {
    padding: 12px 0 0 25px;
    font-size: 17.500px;
  }
  .radio-row {
    height: 27.700px;
    display: flex;
    align-items: center;
    gap: 10px;
  }
  .radio {
    width: 20px;
    height: 20px;
    border-radius: 50%;
    box-sizing: border-box;
    background: linear-gradient(#4d4d4d, #666);
  }
  .radio.on {
    background: radial-gradient(circle, #fff 0 4px, #a5602c 5px);
  }

  .status {
    height: 34px;
    flex: none;
    box-sizing: border-box;
    background: linear-gradient(#3d3d3d, #4a4a4a);
    border-top: 2px solid #131313;
    display: flex;
    align-items: center;
    font-size: 17.300px;
    color: #ececec;
    white-space: nowrap;
  }
  .st-a {
    margin-left: 35px;
    width: 123px;
  }
  .st-b {
    width: 149px;
  }
  .st-ic {
    flex: none;
    margin-right: 4px;
  }
  .st-right {
    margin-left: auto;
    width: 799px;
    height: 100%;
    display: grid;
    grid-template-columns: 26px 77px 26px 104px 53px 53px 52px 63px 22px 155px 38px 76px auto;
    align-items: center;
    justify-items: start;
  }
  .view {
    height: 32px;
    width: 53px;
    display: flex;
    align-items: center;
    justify-content: center;
  }
  .view.on {
    background: #5c5c5c;
  }
  .pct {
    font-size: 17px;
  }
  .zoom-btn {
    width: 13px;
    height: 13px;
    display: flex;
    align-items: center;
    position: relative;
  }
  .zoom-btn i {
    width: 13px;
    height: 3px;
    background: #f0f0f0;
    display: block;
  }
  .plus::after {
    content: "";
    position: absolute;
    left: 5px;
    top: 0;
    width: 3px;
    height: 13px;
    background: #f0f0f0;
  }
  .slider {
    width: 146px;
    height: 7px;
    border-radius: 4px;
    background: #6e6e6e;
    display: flex;
    align-items: center;
    padding-left: 62px;
    box-sizing: border-box;
  }
  .knob {
    width: 23px;
    height: 23px;
    flex: none;
    border-radius: 50%;
    background: #a6a6a6;
  }
</style>
